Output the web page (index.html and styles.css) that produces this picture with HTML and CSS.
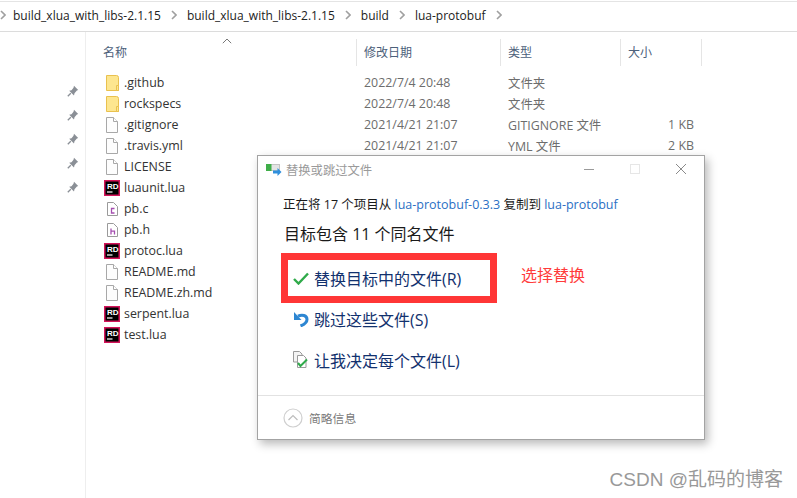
FILE: index.html
```html
<!DOCTYPE html>
<html lang="zh-CN">
<head>
<meta charset="utf-8">
<title>替换或跳过文件</title>
<link rel="stylesheet" href="styles.css">
</head>
<body>
<svg class="defs" width="0" height="0" aria-hidden="true">
  <symbol id="folder" viewBox="0 0 13 16"><path d="M.5.5h10a2 2 0 0 1 2 2v13H.5z" fill="#fde68f" stroke="#e9c14f"/><path d="M10.500 15.500v-5h2v5z" fill="#fde68f" stroke="#e9c14f"/></symbol>
  <symbol id="file" viewBox="0 0 12 16"><path d="M.5.5h7l4 4v11H.5z" fill="#fdfdfd" stroke="#a8a8a8"/><path d="M7.500.5v4h4" fill="#fff" stroke="#a8a8a8"/></symbol>
  <symbol id="cfile" viewBox="0 0 11 14"><path d="M.5.5h6l4 4v9H.5z" fill="#fff" stroke="#9a9a9a"/><path d="M7.500 6.500h-3v4.500h3" fill="none" stroke="#a54fb0" stroke-width="1.300"/></symbol>
  <symbol id="hfile" viewBox="0 0 11 14"><path d="M.5.5h6l4 4v9H.5z" fill="#fff" stroke="#9a9a9a"/><path d="M4 5.500v6M4 8.200h3.500v3.300" fill="none" stroke="#a54fb0" stroke-width="1.300"/></symbol>
  <symbol id="pin" viewBox="0 0 12 12"><path d="M7 .8l4.200 4.200-1.300.6-2.400 2.600-.5 2.300L2.200 5.700l2.300-.5 2-2.400z" fill="#8a8f96"/><path d="M3.800 8.200L.8 11.200" stroke="#8a8f96" stroke-width="1.300"/></symbol>
  <symbol id="chev" viewBox="0 0 6 10"><path d="M1 1l4 4-4 4" fill="none" stroke="#a0a0a0" stroke-width="1.600"/></symbol>
</svg>

<div class="explorer">
  <nav class="crumbs">
    <svg class="chev chev-first"><use href="#chev"/></svg><span>build_xlua_with_libs-2.1.15</span>
    <svg class="chev"><use href="#chev"/></svg><span>build_xlua_with_libs-2.1.15</span>
    <svg class="chev"><use href="#chev"/></svg><span>build</span>
    <svg class="chev"><use href="#chev"/></svg><span>lua-protobuf</span>
    <svg class="chev"><use href="#chev"/></svg>
  </nav>
  <div class="main">
    <aside class="pins">
      <svg class="pin"><use href="#pin"/></svg>
      <svg class="pin"><use href="#pin"/></svg>
      <svg class="pin"><use href="#pin"/></svg>
      <svg class="pin"><use href="#pin"/></svg>
      <svg class="pin"><use href="#pin"/></svg>
    </aside>
    <section class="list">
      <div class="sort-caret"><svg width="10" height="6" viewBox="0 0 10 6"><path d="M.8 5.200L5 1l4.200 4.200" fill="none" stroke="#777"/></svg></div>
      <div class="head">
        <div class="hcell name-h">名称</div>
        <div class="hcell">修改日期</div>
        <div class="hcell">类型</div>
        <div class="hcell">大小</div>
      </div>
      <div class="rows">
        <div class="row"><div class="name"><svg class="ic-folder"><use href="#folder"/></svg>.github</div><div class="cell">2022/7/4 20:48</div><div class="cell">文件夹</div><div class="cell size"></div></div>
        <div class="row"><div class="name"><svg class="ic-folder"><use href="#folder"/></svg>rockspecs</div><div class="cell">2022/7/4 20:48</div><div class="cell">文件夹</div><div class="cell size"></div></div>
        <div class="row"><div class="name"><svg class="ic-file"><use href="#file"/></svg>.gitignore</div><div class="cell">2021/4/21 21:07</div><div class="cell">GITIGNORE 文件</div><div class="cell size">1 KB</div></div>
        <div class="row"><div class="name"><svg class="ic-file"><use href="#file"/></svg>.travis.yml</div><div class="cell">2021/4/21 21:07</div><div class="cell">YML 文件</div><div class="cell size">2 KB</div></div>
        <div class="row"><div class="name"><svg class="ic-file"><use href="#file"/></svg>LICENSE</div></div>
        <div class="row"><div class="name"><svg class="ic-rd" viewBox="0 0 16 16"><rect x=".75" y=".75" width="14.5" height="14.5" fill="#000" stroke="#d4145a" stroke-width="1.5"/><text x="3" y="9.4" class="rd-text">RD</text><rect x="3" y="11.4" width="5.5" height="1.2" fill="#fff"/></svg>luaunit.lua</div></div>
        <div class="row"><div class="name"><svg class="ic-c"><use href="#cfile"/></svg>pb.c</div></div>
        <div class="row"><div class="name"><svg class="ic-c"><use href="#hfile"/></svg>pb.h</div></div>
        <div class="row"><div class="name"><svg class="ic-rd" viewBox="0 0 16 16"><rect x=".75" y=".75" width="14.5" height="14.5" fill="#000" stroke="#d4145a" stroke-width="1.5"/><text x="3" y="9.4" class="rd-text">RD</text><rect x="3" y="11.4" width="5.5" height="1.2" fill="#fff"/></svg>protoc.lua</div></div>
        <div class="row"><div class="name"><svg class="ic-file"><use href="#file"/></svg>README.md</div></div>
        <div class="row"><div class="name"><svg class="ic-file"><use href="#file"/></svg>README.zh.md</div></div>
        <div class="row"><div class="name"><svg class="ic-rd" viewBox="0 0 16 16"><rect x=".75" y=".75" width="14.5" height="14.5" fill="#000" stroke="#d4145a" stroke-width="1.5"/><text x="3" y="9.4" class="rd-text">RD</text><rect x="3" y="11.4" width="5.5" height="1.2" fill="#fff"/></svg>serpent.lua</div></div>
        <div class="row"><div class="name"><svg class="ic-rd" viewBox="0 0 16 16"><rect x=".75" y=".75" width="14.5" height="14.5" fill="#000" stroke="#d4145a" stroke-width="1.5"/><text x="3" y="9.4" class="rd-text">RD</text><rect x="3" y="11.4" width="5.5" height="1.2" fill="#fff"/></svg>test.lua</div></div>
      </div>
    </section>
  </div>
</div>

<div class="dialog">
  <header class="titlebar">
    <svg class="title-ic" width="16" height="12" viewBox="0 0 16 12"><rect x=".5" y=".5" width="13" height="6" fill="#e4e4e4" stroke="#c4c4c4"/><rect x="0" y="0" width="5.500" height="7" fill="#3fae49"/><path d="M7 6.500h4.500V4L15.500 8 11.500 12V9.500H7z" fill="#2f8fdc"/></svg>
    <span class="title">替换或跳过文件</span>
    <div class="controls">
      <svg width="10" height="10" viewBox="0 0 10 10"><path d="M0 5.500h10" stroke="#9a9a9a"/></svg>
      <svg width="10" height="10" viewBox="0 0 10 10"><rect x=".5" y=".5" width="9" height="9" fill="none" stroke="#e6e6e6"/></svg>
      <svg width="10" height="10" viewBox="0 0 10 10"><path d="M0 0l10 10M10 0L0 10" stroke="#8a8a8a" fill="none"/></svg>
    </div>
  </header>
  <div class="body">
    <p class="status">正在将 17 个项目从 <span class="link">lua-protobuf-0.3.3</span> 复制到 <span class="link">lua-protobuf</span></p>
    <h2 class="heading">目标包含 11 个同名文件</h2>
    <div class="highlight-row">
      <div class="highlight">
        <svg class="opt-ic" width="16" height="13" viewBox="0 0 16 13"><path d="M1 7l4.500 4.500L15 1.500" fill="none" stroke="#2faa4a" stroke-width="2.400"/></svg>
        <span class="opt-text">替换目标中的文件(R)</span>
      </div>
      <span class="note">选择替换</span>
    </div>
    <div class="option">
      <svg class="opt-ic" width="16" height="16" viewBox="0 0 16 16"><path d="M1 1v8h7.500z" fill="#2d86d2"/><path d="M5 5.200c4-2 9-1 9 3.300 0 3-3 5-6.500 6.500" fill="none" stroke="#2d86d2" stroke-width="3"/></svg>
      <span class="opt-text">跳过这些文件(S)</span>
    </div>
    <div class="option">
      <svg class="opt-ic" width="16" height="17" viewBox="0 0 16 17"><path d="M.5.5h6l2.500 2.500v8H.5z" fill="#f4f4f4" stroke="#9a9a9a"/><path d="M4.500 4.500h6l2.500 2.500v9.500h-8.500z" fill="#fff" stroke="#9a9a9a"/><path d="M5 12l2.500 3L14 8.500" fill="none" stroke="#2faa4a" stroke-width="2"/></svg>
      <span class="opt-text">让我决定每个文件(L)</span>
    </div>
  </div>
  <footer class="foot">
    <svg width="20" height="20" viewBox="0 0 20 20"><circle cx="10" cy="10" r="9" fill="#fff" stroke="#cfcfcf" stroke-width="1.200"/><path d="M5.500 12L10 7.500l4.500 4.500" fill="none" stroke="#bdbdbd" stroke-width="1.200"/></svg>
    <span>简略信息</span>
  </footer>
</div>

<div class="watermark">CSDN @乱码的博客</div>
</body>
</html>
```
FILE: styles.css
```css
* { box-sizing: border-box; }
html, body { margin: 0; height: 100%; }
body {
  position: relative;
  width: 797px;
  height: 498px;
  overflow: hidden;
  background: #fff;
  font-family: "Open Sans", "Noto Sans CJK SC", sans-serif;
  font-size: 12.4px;
  color: #333;
}
.defs { position: absolute; }
.rd-text { font: 700 8px "Liberation Sans", sans-serif; fill: #fff; }

.explorer { display: flex; flex-direction: column; height: 100%; }

.crumbs {
  display: flex;
  align-items: center;
  height: 31px;
  margin-top: 1px;
  border-top: 1px solid #e4e4e4;
  border-bottom: 1px solid #dcdcdc;
  color: #222;
  font-size: 12px;
  white-space: nowrap;
  padding-bottom: 3px;
}
.chev { width: 6px; height: 10px; flex: none; margin: 0 10px; }
.chev-first { margin: 0 7px 0 0; }

.main { display: flex; flex: 1; min-height: 0; }
.pins {
  width: 86px;
  flex: none;
  border-right: 1px solid #eeeeee;
  display: flex;
  flex-direction: column;
  align-items: flex-end;
  gap: 12px;
  padding: 53px 6px 0 0;
}
.pin { width: 12px; height: 12px; }

.list { position: relative; flex: 1; min-width: 0; }
.sort-caret { position: absolute; left: 136px; top: 6px; line-height: 0; }

.head {
  display: grid;
  grid-template-columns: 271px 144px 120px 81px;
  height: 27px;
  margin-top: 7px;
  color: #4c607a;
}
.hcell {
  border-right: 1px solid #e5e5e5;
  padding-left: 7px;
  line-height: 27px;
  font-size: 12px;
}
.name-h { padding-left: 17px; }

.rows { margin-top: 6px; }
.row {
  display: grid;
  grid-template-columns: 271px 144px 120px 73px;
  height: 21px;
  align-items: center;
  color: #6d6d6d;
}
.name { display: flex; align-items: center; padding-left: 18px; color: #333; white-space: nowrap; }
.cell { padding-left: 7px; white-space: nowrap; }
.size { text-align: right; padding-left: 0; }
.ic-folder { width: 13px; height: 16px; margin: 0 5px 0 2px; }
.ic-file { width: 12px; height: 16px; margin: 0 6px 0 2px; }
.ic-rd { width: 16px; height: 16px; margin-right: 4px; }
.ic-c { width: 11px; height: 14px; margin: 0 6px 0 3px; }

.dialog {
  position: absolute;
  left: 257px;
  top: 155px;
  width: 448px;
  height: 285px;
  background: #fff;
  border: 1px solid #a3a3a3;
  box-shadow: 3px 4px 9px rgba(0, 0, 0, .28);
  display: flex;
  flex-direction: column;
}
.titlebar { display: flex; align-items: center; height: 28px; padding: 0 18px 0 8px; flex: none; }
.title-ic { margin-right: 4px; }
.title { color: #9a9a9a; font-size: 12.300px; }
.controls { margin: -2px 0 0 auto; display: flex; gap: 36px; }

.body { flex: 1; padding-left: 26px; }
.status { margin: 12px 0 0 -1px; font-size: 12.500px; line-height: 18px; color: #1a1a1a; white-space: nowrap; }
.link { color: #2b6fc4; }
.heading { margin: 9px 0 0; font-weight: 400; font-size: 16px; line-height: 22px; color: #1a1a1a; }

.highlight-row { display: flex; align-items: center; margin: 8px 0 -5px -3px; }
.highlight {
  display: flex;
  align-items: center;
  width: 216px;
  height: 50px;
  border: 7px solid #ff3636;
  padding-left: 5px;
}
.note { margin: -8px 0 0 24px; color: #ff3b3b; font-size: 16px; }
.option { display: flex; align-items: center; height: 41px; padding-left: 9px; }
.opt-ic { margin-right: 5px; flex: none; }
.opt-text { color: #12316e; font-size: 16px; white-space: nowrap; }

.foot {
  height: 44px;
  flex: none;
  border-top: 1px solid #e2e2e2;
  display: flex;
  align-items: center;
  gap: 6px;
  padding-left: 25px;
  color: #7a7a7a;
  font-size: 11.800px;
}

.watermark {
  position: absolute;
  right: 14px;
  bottom: 7px;
  font-family: "Liberation Sans", "Noto Sans CJK SC", sans-serif;
  font-size: 19px;
  color: #999;
  white-space: nowrap;
}
```
